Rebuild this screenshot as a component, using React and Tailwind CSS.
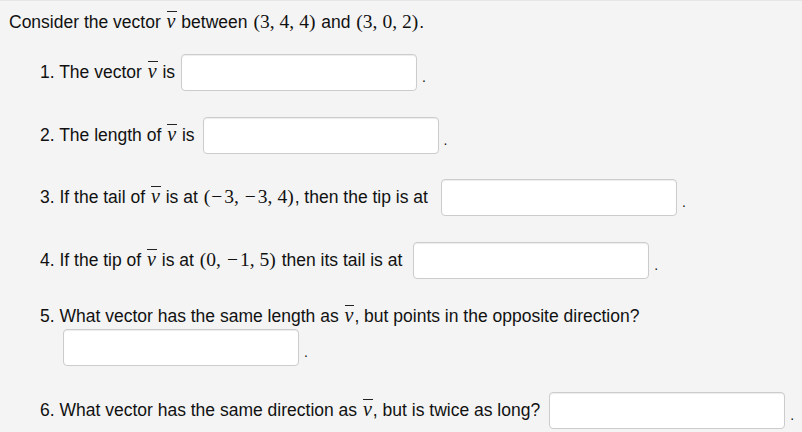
import React from 'react';

const serif = { fontFamily: '"Liberation Serif", serif' };

const V = () => (
  <span className="relative inline-block italic text-[20px] leading-none px-[1px]" style={serif}>
    v
    <span className="absolute left-[1px] right-0 top-[0px] h-[1px] bg-[#222]"></span>
  </span>
);

// tuple like (3, 4, 4) with thin spacing after commas
const M = ({ items }) => (
  <span className="text-[19.5px] leading-none mx-[1px]" style={serif}>
    (
    {items.map((it, i) => (
      <span key={i}>
        {it.startsWith('−') ? (
          <>
            <span className="pl-[1px] pr-[2px]">−</span>
            {it.slice(1)}
          </>
        ) : (
          it
        )}
        {i < items.length - 1 && <span className="mr-[5px]">,</span>}
      </span>
    ))}
    )
  </span>
);

const Box = ({ className = '' }) => (
  <span className={`inline-flex items-center ${className}`}>
    <span className="inline-block w-[236px] h-[37px] bg-white border border-[#cccccc] rounded-[4px] shadow-[inset_0_1px_1px_rgba(0,0,0,0.075)]"></span>
    <span className="ml-[5px] mt-[10px] text-[14px]">.</span>
  </span>
);

const App = () => {
  return (
    <div
      className="w-[802px] h-[432px] bg-[#f4f4f4] text-[#111] text-[17.5px] overflow-hidden border-t border-[#e6e6e6]"
      style={{ fontFamily: '"Liberation Sans", Arial, sans-serif' }}
    >
      <div className="h-[43px] flex items-center pl-[9px]">
        <span>
          Consider the vector <V /> between <M items={['3', '4', '4']} /> and <M items={['3', '0', '2']} />.
        </span>
      </div>

      <div className="pl-[40px] mt-[10px]">
        <div className="flex items-center h-[37px]">
          <span>1. The vector <V /> is</span>
          <Box className="ml-[6px]" />
        </div>

        <div className="flex items-center h-[37px] mt-[26px]">
          <span>2. The length of <V /> is</span>
          <Box className="ml-[8px]" />
        </div>

        <div className="flex items-center h-[37px] mt-[25px]">
          <span>
            3. If the tail of <V /> is at <M items={['−3', '−3', '4']} />, then the tip is at
          </span>
          <Box className="ml-[13px]" />
        </div>

        <div className="flex items-center h-[37px] mt-[26px]">
          <span>
            4. If the tip of <V /> is at <M items={['0', '−1', '5']} /> then its tail is at
          </span>
          <Box className="ml-[11px]" />
        </div>

        <div className="mt-[27px] h-[20px] flex items-center">
          <span>
            5. What vector has the same length as <V />, but points in the opposite direction?
          </span>
        </div>
        <div className="flex items-center h-[37px] mt-[3px] pl-[23px]">
          <Box />
        </div>

        <div className="flex items-center h-[37px] mt-[26px]">
          <span>
            6. What vector has the same direction as <V />, but is twice as long?
          </span>
          <Box className="ml-[9px]" />
        </div>
      </div>
    </div>
  );
};

export default App;
